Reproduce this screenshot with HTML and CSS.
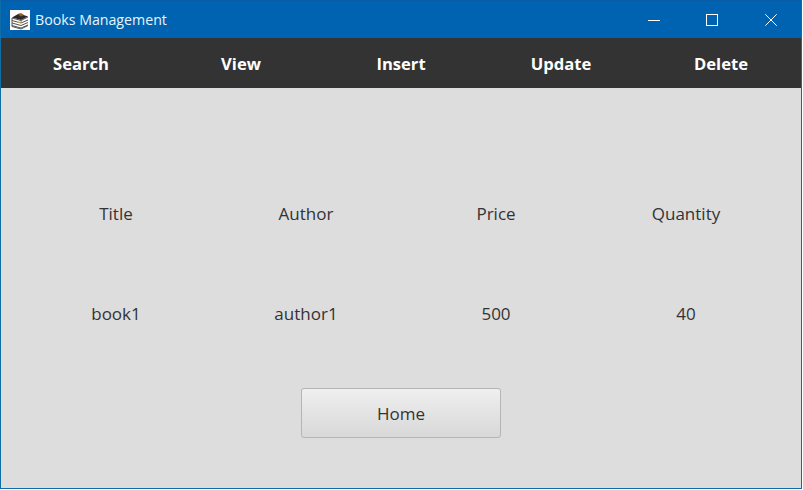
FILE: index.html
```html
<!DOCTYPE html>
<html lang="en">
<head>
<meta charset="utf-8">
<title>Books Management</title>
<link rel="stylesheet" href="styles.css">
</head>
<body>
<div class="window">
  <header class="titlebar">
    <div class="app-icon">
      <svg width="20" height="20" viewBox="0 0 20 20">
        <rect width="20" height="20" fill="#fff"/>
        <path d="M2 7.5 9 3.5 18 6.5 11 10Z" fill="#2b2a28"/>
        <path d="M8 4.5 11 3 14 5 11 6.5Z" fill="#8a6428"/>
        <path d="M2 8 2 16.5 11 19 18 15.5" fill="none" stroke="#555" stroke-width="1"/>
        <path d="M2 10.5 11 13 18 10M2 13 11 15.5 18 12.5M2 15.5 11 18 18 15M2 8 11 10.5 18 7" fill="none" stroke="#555" stroke-width="1"/>
        <path d="M8 12.5 12 11.5" stroke="#d8b060" stroke-width="1"/>
      </svg>
    </div>
    <span class="app-title">Books Management</span>
    <div class="controls">
      <div class="control">
        <svg width="12" height="12" viewBox="0 0 12 12"><path d="M0 6.5H12" stroke="#fff" stroke-width="1"/></svg>
      </div>
      <div class="control">
        <svg width="12" height="12" viewBox="0 0 12 12"><rect x=".5" y=".5" width="11" height="11" fill="none" stroke="#fff" stroke-width="1"/></svg>
      </div>
      <div class="control">
        <svg width="12" height="12" viewBox="0 0 12 12"><path d="M.3.3 11.7 11.7M11.7.3.3 11.7" stroke="#fff" stroke-width="1"/></svg>
      </div>
    </div>
  </header>
  <nav class="menu">
    <span class="menu-item">Search</span>
    <span class="menu-item">View</span>
    <span class="menu-item">Insert</span>
    <span class="menu-item">Update</span>
    <span class="menu-item">Delete</span>
  </nav>
  <main class="content">
    <div class="row">
      <span>Title</span><span>Author</span><span>Price</span><span>Quantity</span>
    </div>
    <div class="row">
      <span>book1</span><span>author1</span><span>500</span><span>40</span>
    </div>
    <button class="home" type="button">Home</button>
  </main>
</div>
</body>
</html>
```

FILE: styles.css
```css
html, body {
  margin: 0;
  padding: 0;
}
body {
  width: 803px;
  height: 490px;
  overflow: hidden;
  background: #fff;
  font-family: "Open Sans", "Noto Sans", sans-serif;
}
.window {
  width: 802px;
  height: 489px;
  box-sizing: border-box;
  border: 1px solid #0e6fa8;
  border-top-color: #0a5ca8;
  display: flex;
  flex-direction: column;
  background: #dddddd;
}
.titlebar {
  height: 37px;
  flex: none;
  background: #0063b1;
  display: flex;
  align-items: center;
  padding-left: 9px;
  color: #fff;
}
.app-icon {
  width: 20px;
  height: 20px;
  display: flex;
}
.app-title {
  margin-left: 5px;
  font-size: 14.2px;
  color: #eaf3fb;
}
.controls {
  margin-left: auto;
  display: flex;
}
.control {
  width: 58px;
  height: 37px;
  display: flex;
  align-items: center;
  justify-content: center;
}
.control:last-child {
  width: 60px;
}
.menu {
  height: 50px;
  flex: none;
  background: #333333;
  display: grid;
  grid-template-columns: repeat(5, 160px);
  align-items: center;
  justify-items: center;
  color: #fff;
  font-size: 16.6px;
  font-weight: 700;
}
.content {
  flex: 1;
  display: flex;
  flex-direction: column;
  align-items: center;
  padding: 75px 20px 0;
}
.row {
  height: 100px;
  width: 760px;
  display: grid;
  grid-template-columns: repeat(4, 190px);
  align-items: center;
  justify-items: center;
  font-size: 17px;
  font-weight: 400;
  color: #333;
}
.home {
  margin-top: 25px;
  width: 200px;
  height: 50px;
  border: 1px solid #b5b5b5;
  border-radius: 3px;
  background: linear-gradient(#efefef, #d8d8d8);
  font-family: inherit;
  font-size: 17px;
  color: #333;
  padding: 0;
}
```
